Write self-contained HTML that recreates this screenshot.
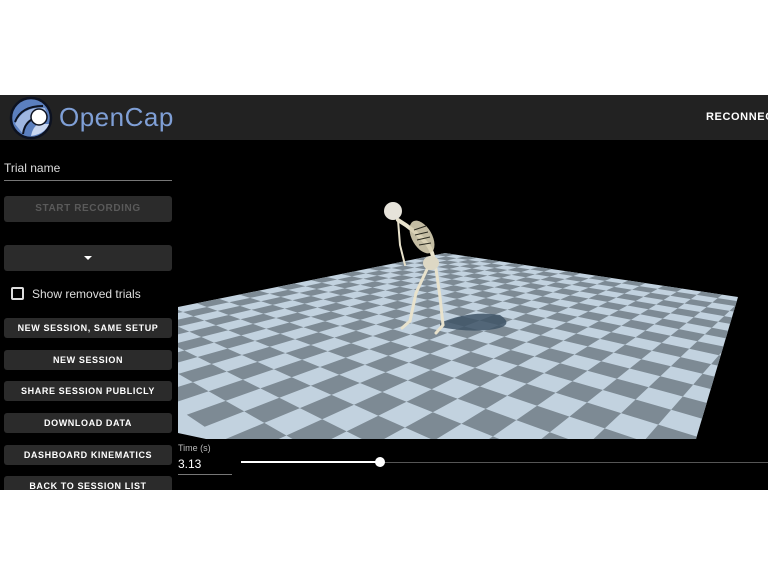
<!DOCTYPE html>
<html><head><meta charset="utf-8"><style>
*{margin:0;padding:0;box-sizing:border-box}
html,body{width:768px;height:585px;overflow:hidden}
body{background:#fff;position:relative;font-family:"Liberation Sans",sans-serif}
#app{position:absolute;left:0;top:95px;width:768px;height:395px;background:#000;overflow:hidden}
#hdr{position:absolute;left:0;top:0;width:768px;height:45px;background:#222}
.btn{position:absolute;left:4px;width:168px;background:#2b2b2b;border-radius:3px;color:#fff;font-weight:bold;font-size:9px;letter-spacing:.6px;text-align:center}
</style></head><body>
<div id="app">
 <div id="hdr">
  <svg style="position:absolute;left:9px;top:1px" width="44" height="44" viewBox="0 0 44 44">
   <circle cx="22" cy="22" r="20" fill="#5b7fbf" stroke="#0d1220" stroke-width="2.5"/>
   <path d="M6 28 Q14 10 36 12 L38 18 Q20 16 14 38 Z" fill="#9fb6e0"/>
   <path d="M14 38 Q16 22 34 20" stroke="#0d1220" stroke-width="2" fill="none"/>
   <path d="M6 26 Q12 10 34 10" stroke="#0d1220" stroke-width="2" fill="none"/>
   <path d="M22 40 Q24 30 30 28 L40 28 Q36 38 22 40Z" fill="#c8d6f0"/>
   <circle cx="30" cy="21" r="8" fill="#fff" stroke="#0d1220" stroke-width="1.5"/>
  </svg>
  <div style="position:absolute;left:59px;top:7px;font-size:26px;color:#7f9fd6;letter-spacing:.5px">OpenCap</div>
  <div style="position:absolute;left:706px;top:16px;font-size:11px;font-weight:bold;color:#fff;letter-spacing:.6px">RECONNECT</div>
 </div>
 <div style="position:absolute;left:4px;top:66px;color:#ddd;font-size:12px">Trial name</div>
 <div style="position:absolute;left:4px;top:85px;width:168px;height:1px;background:#777"></div>
 <div class="btn" style="top:101px;height:26px;line-height:26px;color:#5a5a5a;font-size:10px">START RECORDING</div>
 <div class="btn" style="top:150px;height:26px"><div style="position:absolute;left:80px;top:11px;border:4px solid transparent;border-top:4px solid #fff"></div></div>
 <div style="position:absolute;left:11px;top:192px;width:13px;height:13px;border:2px solid #ddd;border-radius:2px"></div>
 <div style="position:absolute;left:32px;top:192px;color:#ddd;font-size:12px">Show removed trials</div>
 <div class="btn" style="top:223px;height:20px;line-height:20px">NEW SESSION, SAME SETUP</div>
 <div class="btn" style="top:255px;height:20px;line-height:20px">NEW SESSION</div>
 <div class="btn" style="top:286px;height:20px;line-height:20px">SHARE SESSION PUBLICLY</div>
 <div class="btn" style="top:318px;height:20px;line-height:20px">DOWNLOAD DATA</div>
 <div class="btn" style="top:350px;height:20px;line-height:20px">DASHBOARD KINEMATICS</div>
 <div class="btn" style="top:381px;height:14px;line-height:20px;border-radius:3px 3px 0 0">BACK TO SESSION LIST</div>
 <svg id="scene" style="position:absolute;left:0;top:0" width="768" height="395">
  <defs><clipPath id="cp"><polygon points="178,212 445,158 738,202 696,344 206,344 178,338"/></clipPath></defs>
  <g id="floor" clip-path="url(#cp)"><polygon points="0,0 768,0 768,395 0,395" fill="#c2d2df"/></g>
  <path d="M440 228 Q470 215 500 220 Q515 230 495 234 Q470 238 440 232Z" fill="#3e5466" opacity=".85"/>
  <g stroke="#e8e2cc" stroke-linecap="round" fill="none">
   <path d="M398 125 Q415 135 428 150 Q436 162 432 172" stroke-width="4"/>
   <path d="M428 172 L416 198 L410 226" stroke-width="3"/>
   <path d="M436 174 L440 202 L443 230" stroke-width="3"/>
   <path d="M398 125 L400 150 L405 170" stroke-width="2"/>
   <path d="M410 226 L402 233 M443 230 L436 238" stroke-width="3"/>
  </g>
  <ellipse cx="422" cy="142" rx="10" ry="18" transform="rotate(-30 422 142)" fill="#d8d0b4" opacity=".9"/>
  <g stroke="#2a2a20" stroke-width="1"><path d="M414 135 L426 131 M415 140 L428 137 M417 145 L430 142 M419 150 L431 148"/></g>
  <circle cx="393" cy="116" r="9" fill="#e6e3da"/>
  <ellipse cx="431" cy="168" rx="8" ry="7" fill="#ddd8c4"/>
 </svg>
 <div style="position:absolute;left:178px;top:348px;color:#bbb;font-size:9px">Time (s)</div>
 <div style="position:absolute;left:178px;top:362px;color:#fff;font-size:12px">3.13</div>
 <div style="position:absolute;left:178px;top:379px;width:54px;height:1px;background:#777"></div>
 <div style="position:absolute;left:241px;top:367px;width:527px;height:1px;background:#555"></div>
 <div style="position:absolute;left:241px;top:366px;width:139px;height:2px;background:#fff"></div>
 <div style="position:absolute;left:375px;top:362px;width:10px;height:10px;border-radius:50%;background:#fff"></div>
</div>
<script>
(function(){
 var F=[445,158],R=[790,209],N=[550,560],L=[60,236];
 var x0=F[0],y0=F[1],x1=R[0],y1=R[1],x2=N[0],y2=N[1],x3=L[0],y3=L[1];
 var dx1=x1-x2,dx2=x3-x2,dx3=x0-x1+x2-x3,dy1=y1-y2,dy2=y3-y2,dy3=y0-y1+y2-y3;
 var den=dx1*dy2-dx2*dy1;
 var g=(dx3*dy2-dx2*dy3)/den,h=(dx1*dy3-dx3*dy1)/den;
 var a=x1-x0+g*x1,b=x3-x0+h*x3,c=x0,d=y1-y0+g*y1,e=y3-y0+h*y3,f=y0;
 function P(u,v){var w=g*u+h*v+1;return ((a*u+b*v+c)/w).toFixed(1)+","+((d*u+e*v+f)/w).toFixed(1);}
 var n=22,s="",gEl=document.getElementById("floor");
 for(var i=0;i<n;i++)for(var j=0;j<n;j++){if((i+j)%2)continue;
  var u0=i/n,u1=(i+1)/n,v0=j/n,v1=(j+1)/n;
  s+='<polygon fill="#7d8a94" points="'+P(u0,v0)+' '+P(u1,v0)+' '+P(u1,v1)+' '+P(u0,v1)+'"/>';}
 gEl.insertAdjacentHTML("beforeend",s);
})();
</script>
</body></html>
